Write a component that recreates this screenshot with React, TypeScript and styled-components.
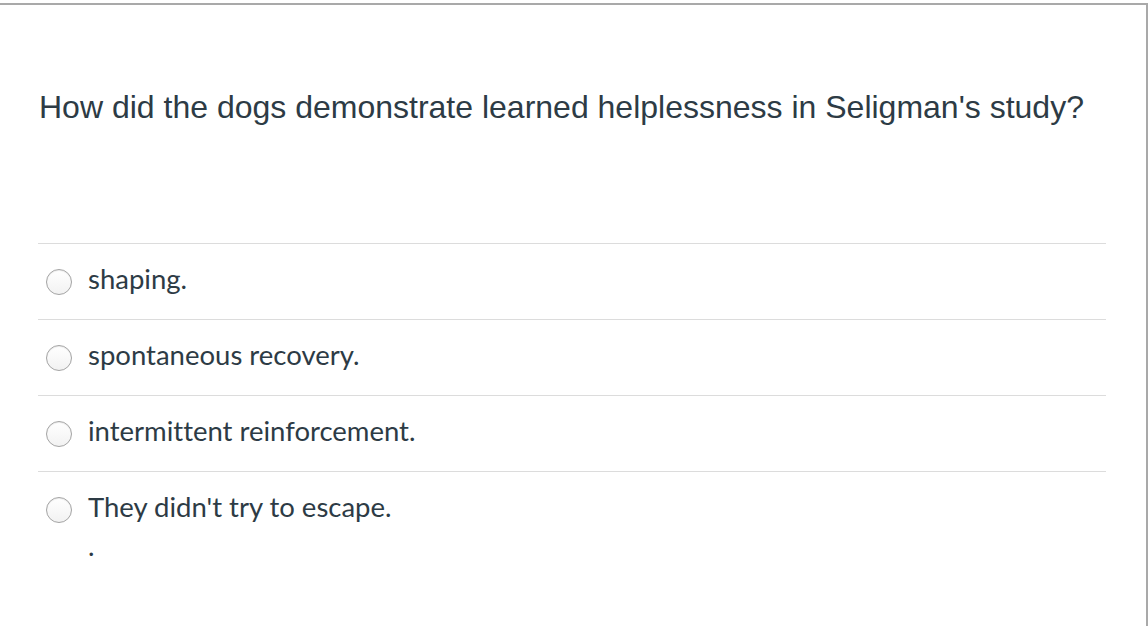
import React from "react";
import styled, { createGlobalStyle } from "styled-components";

const Global = createGlobalStyle`
  html, body { margin: 0; padding: 0; background: #fff; }
  body { width: 1148px; height: 626px; overflow: hidden; }
`;

const Frame = styled.div`
  margin-top: 3px;
  box-sizing: border-box;
  width: 1148px;
  height: 623px;
  border-top: 2px solid #a9a9a9;
  border-right: 2px solid #a9a9a9;
  background: #fff;
  padding: 0 40px 0 38px;
`;

const Question = styled.div`
  font-family: "Liberation Sans", Arial, sans-serif;
  font-size: 32px;
  color: #2d3b45;
  padding: 83px 0 0 1px;
  height: 238px;
  box-sizing: border-box;
  line-height: 38px;
`;

const List = styled.div`
  display: flex;
  flex-direction: column;
`;

const Row = styled.label`
  display: flex;
  align-items: center;
  height: 76px;
  border-top: 1px solid #dcdcdc;
  box-sizing: border-box;
  font-family: Lato, "Noto Sans", sans-serif;
  font-size: 27.5px;
  font-variant-ligatures: none;
  color: #2d3b45;
`;

const Text = styled.span`
  line-height: 33px;
  margin-top: -6px;
`;

const Radio = styled.span`
  flex: none;
  width: 26px;
  height: 26px;
  border-radius: 50%;
  margin: 0 16px 0 8px;
  box-sizing: border-box;
  border: 1px solid #a4a4a4;
  background: linear-gradient(#ffffff, #f2f2f2);
  box-shadow: inset 0 1px 1px rgba(0, 0, 0, 0.08);
`;

const Trailing = styled.div`
  font-family: Lato, "Noto Sans", sans-serif;
  font-size: 27.5px;
  color: #2d3b45;
  padding-left: 50px;
  line-height: 33px;
  margin-top: -18px;
`;

const answers = [
  "shaping.",
  "spontaneous recovery.",
  "intermittent reinforcement.",
  "They didn't try to escape.",
];

export default function App() {
  return (
    <>
      <Global />
      <Frame>
        <Question>
          How did the dogs demonstrate learned helplessness in Seligman's study?
        </Question>
        <List>
          {answers.map((a) => (
            <Row key={a}>
              <Radio />
              <Text>{a}</Text>
            </Row>
          ))}
        </List>
        <Trailing>.</Trailing>
      </Frame>
    </>
  );
}
